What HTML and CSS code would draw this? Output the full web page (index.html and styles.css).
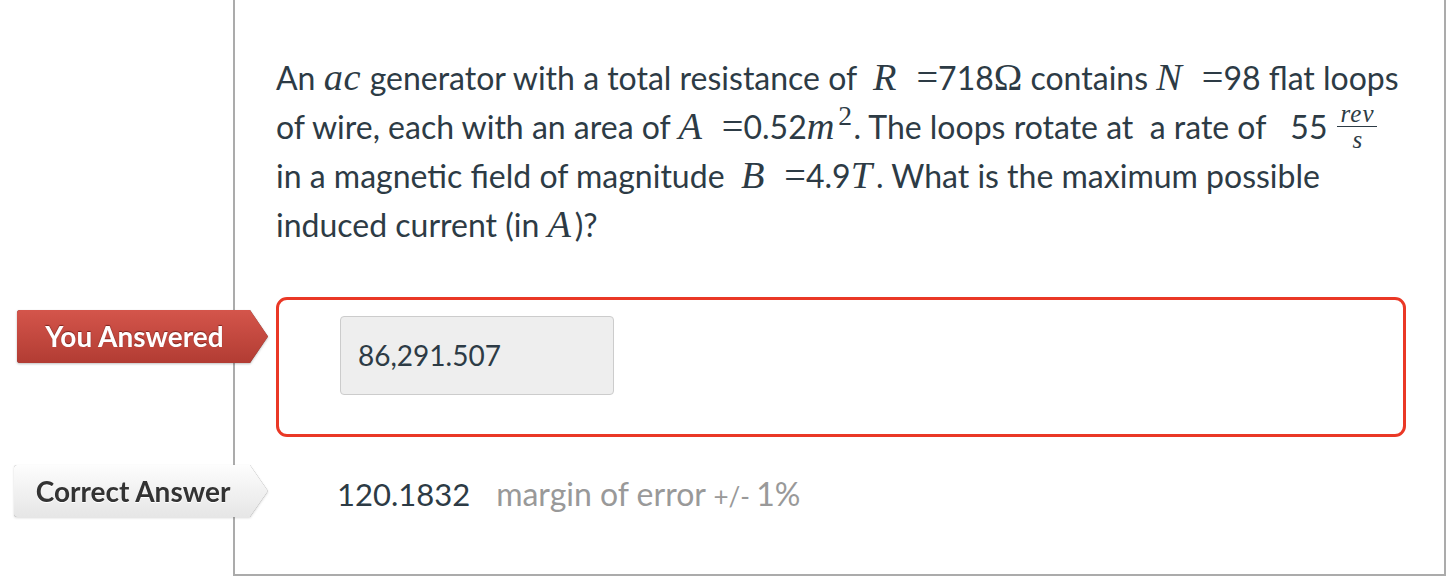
FILE: index.html
```html
<!DOCTYPE html>
<html>
<head>
<meta charset="utf-8">
<link rel="stylesheet" href="styles.css">
</head>
<body>
<div class="quiz">
  <div class="question">
    An <span class="m mac">ac</span> generator with a total resistance of &nbsp;<span class="m">R</span><span class="m mo rel">=</span>718<span class="m mo">Ω</span> contains <span class="m">N</span><span class="m mo rel">=</span>98 flat loops<br>of wire, each with an area of <span class="m">A</span><span class="m mo rel">=</span>0.52<span class="m">m<sup class="sup">2</sup></span>. The loops rotate at &nbsp;a rate of &nbsp;&nbsp;55<span class="frac"><span class="num">rev</span><span class="den">s</span></span><br>in a magnetic field of magnitude &nbsp;<span class="m">B</span><span class="m mo rel">=</span>4.9<span class="m">T</span>. What is the maximum possible<br>induced current (in <span class="m">A</span>)?
  </div>

  <div class="answer answer-wrong">
    <div class="tag-wrap">
      <div class="tag tag-red">You Answered</div>
    </div>
    <div class="answer-box">
      <div class="answer-input">86,291.507</div>
    </div>
  </div>

  <div class="answer answer-correct">
    <div class="tag-wrap tag-wrap-light">
      <div class="tag tag-light">Correct Answer</div>
    </div>
    <div class="correct-value">120.1832 <span class="margin">margin of error <span class="pm">+/-</span> 1%</span></div>
  </div>
</div>
</body>
</html>
```

FILE: styles.css
```css
html, body {
  margin: 0;
  padding: 0;
  background: #ffffff;
}

body {
  font-family: Lato, "Open Sans", sans-serif;
  color: #2d3b45;
}

.quiz {
  margin-left: 233px;
  height: 576px;
  box-sizing: border-box;
  border-left: 2px solid #ababab;
  border-right: 2px solid #ababab;
  border-bottom: 2px solid #ababab;
  padding: 53px 38px 0 41px;
}

.question {
  font-size: 32px;
  line-height: 49px;
  white-space: nowrap;
}

.m {
  font-family: "Liberation Serif", "DejaVu Serif", serif;
  font-style: italic;
  font-size: 1.2em;
  line-height: 0;
  letter-spacing: 0.1em;
}

.mac {
  letter-spacing: 0.02em;
}

.mo {
  font-style: normal;
  letter-spacing: 0;
}

.rel {
  margin-left: 0.42em;
}

.sup {
  font-style: normal;
  font-size: 0.72em;
  line-height: 0;
  vertical-align: 0.5em;
  letter-spacing: 0.05em;
}

.frac {
  display: inline-flex;
  flex-direction: column;
  align-items: center;
  vertical-align: middle;
  margin-left: 10px;
  margin-top: -8px;
  font-family: "Liberation Serif", "DejaVu Serif", serif;
  font-style: italic;
  font-size: 25px;
  line-height: 18px;
}

.frac .num {
  border-bottom: 1.5px solid #2d3b45;
  padding: 0 3px 3px;
  letter-spacing: 0.04em;
}

.frac .den {
  padding-top: 4px;
}

.answer {
  position: relative;
}

.answer-wrong {
  margin-top: 48px;
}

.answer-box {
  height: 140px;
  box-sizing: border-box;
  border: 3px solid #ea3826;
  border-radius: 11px;
  padding: 16px 0 0 61px;
}

.answer-input {
  width: 274px;
  height: 79px;
  box-sizing: border-box;
  background: #eeeeee;
  border: 1px solid #cccccc;
  border-radius: 4px;
  padding-left: 17px;
  font-size: 28px;
  line-height: 77px;
  color: #2d3b45;
}

.tag-wrap {
  position: absolute;
  left: -259px;
  top: 13px;
  filter: drop-shadow(0 0 0.6px rgba(80, 20, 15, 0.8)) drop-shadow(0 1px 1px rgba(0, 0, 0, 0.25));
}

.tag {
  width: 251px;
  height: 53px;
  box-sizing: border-box;
  border-radius: 3px;
  clip-path: polygon(0 0, 233px 0, 100% 50%, 233px 100%, 0 100%);
  font-weight: 700;
  font-size: 28px;
  line-height: 53px;
  text-align: center;
  padding-right: 16px;
}

.tag-red {
  color: #ffffff;
  background: linear-gradient(#d4554b, #b23c33);
  text-shadow: 0 -1px 1px rgba(90, 20, 15, 0.7);
}

.answer-correct {
  margin-top: 28px;
  height: 52px;
  display: flex;
  align-items: center;
}

.tag-wrap-light {
  top: 0;
  left: -262px;
  filter: drop-shadow(0 0 0.7px rgba(0, 0, 0, 0.45)) drop-shadow(0 1px 1px rgba(0, 0, 0, 0.15));
}

.tag-light {
  width: 254px;
  height: 52px;
  line-height: 52px;
  clip-path: polygon(0 0, 236px 0, 100% 50%, 236px 100%, 0 100%);
  color: #333333;
  background: linear-gradient(#fdfdfd, #e6e6e6);
  text-shadow: 0 1px 0 #ffffff;
  padding-right: 16px;
}

.correct-value {
  margin-left: 61px;
  font-size: 31px;
  padding-top: 4px;
  color: #2d3b45;
  white-space: nowrap;
}

.margin {
  color: #999999;
  margin-left: 18px;
  font-size: 32px;
}

.pm {
  font-size: 26px;
  margin-right: -2px;
}
```
